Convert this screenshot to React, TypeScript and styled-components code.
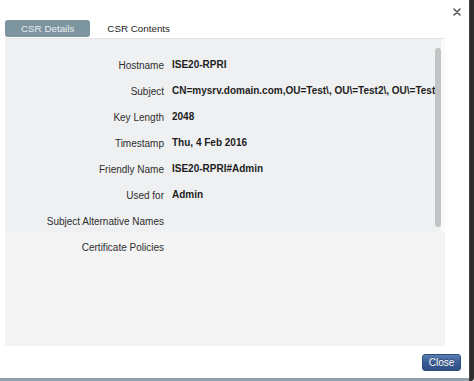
import React, { useState } from 'react';
import styled, { createGlobalStyle } from 'styled-components';

const GlobalStyle = createGlobalStyle`
  html, body {
    margin: 0;
    padding: 0;
    background: #ffffff;
    font-family: "Liberation Sans", Arial, sans-serif;
  }
`;

const Page = styled.div`
  display: grid;
  grid-template-columns: 469px 5px;
  grid-template-rows: 378px 3px;
  width: 474px;
  height: 381px;
  overflow: hidden;
`;

const Dialog = styled.div`
  grid-column: 1;
  grid-row: 1;
  display: flex;
  flex-direction: column;
  background: #ffffff;
`;

const WindowEdge = styled.div`
  grid-column: 2;
  grid-row: 1 / span 2;
  background: linear-gradient(to right, #4a4a4a, #262626 40%, #333333);
  border-bottom-right-radius: 3px;
`;

const BottomEdge = styled.div`
  grid-column: 1;
  grid-row: 2;
  background: #95a2ae;
`;

const TopBar = styled.div`
  height: 20px;
  display: flex;
  justify-content: flex-end;
  align-items: center;
  padding-right: 8px;
`;

const CloseX = styled.button`
  width: 9px;
  height: 9px;
  padding: 0;
  border: none;
  background: none;
  display: flex;
  align-items: center;
  justify-content: center;
  cursor: pointer;
  margin-top: 3px;
`;

const TabsList = styled.div`
  display: flex;
  gap: 1px;
  margin-left: 5px;
  height: 18px;
`;

const Tab = styled.button<{ active: boolean }>`
  height: 17px;
  min-width: ${p => (p.active ? '83px' : 'auto')};
  padding: 0 16px;
  border: none;
  border-radius: 3px;
  background: ${p => (p.active ? '#7d959f' : 'transparent')};
  color: ${p => (p.active ? '#e8eef1' : '#222222')};
  font-family: "Liberation Sans", Arial, sans-serif;
  font-size: 9.8px;
  line-height: 17px;
  cursor: pointer;
`;

const Panel = styled.div`
  margin: 0 24px 0 5px;
  height: 308px;
  background: #f4f4f4;
  border-top: 1px solid #e3e4e5;
  box-sizing: border-box;
  display: flex;
  flex-direction: column;
`;

const ScrollArea = styled.div`
  display: flex;
  height: 193px;
  background: #eef0f1;
`;

const Content = styled.div`
  width: 430px;
  overflow-x: clip;
  overflow-y: visible;
  padding-top: 14px;
  display: grid;
  grid-template-columns: 159px auto;
  grid-auto-rows: 26px;
  column-gap: 8px;
  align-content: start;
  align-items: start;
`;

const Label = styled.div`
  text-align: right;
  font-size: 10px;
  line-height: 26px;
  color: #2e2e2e;
  white-space: nowrap;
`;

const Value = styled.div`
  font-size: 10px;
  font-weight: bold;
  line-height: 23px;
  color: #1e1e1e;
  white-space: nowrap;
`;

const ScrollTrack = styled.div`
  width: 10px;
  padding-top: 9px;
  box-sizing: border-box;
  background: linear-gradient(to right, #eef0f1 0, #eef0f1 6px, #fafafa 6px);
`;

const Thumb = styled.div`
  width: 6px;
  height: 179px;
  border-radius: 3px;
  background: #c2c3c4;
`;

const Footer = styled.div`
  display: flex;
  justify-content: flex-end;
  padding: 8px 8px 0 0;
`;

const CloseButton = styled.button`
  width: 39px;
  height: 17px;
  padding: 0;
  border: 1px solid #2d4b7a;
  border-radius: 3px;
  background: linear-gradient(to bottom, #5a7db3, #3a5d93 50%, #2f5087);
  color: #ffffff;
  font-family: "Liberation Sans", Arial, sans-serif;
  font-size: 10px;
  line-height: 15px;
  text-shadow: 0 -1px 0 rgba(0, 0, 0, 0.3);
  cursor: pointer;
`;

type TabType = 'details' | 'contents';

const rows: [string, string][] = [
  ['Hostname', 'ISE20-RPRI'],
  ['Subject', 'CN=mysrv.domain.com,OU=Test\\, OU\\=Test2\\, OU\\=Test3'],
  ['Key Length', '2048'],
  ['Timestamp', 'Thu, 4 Feb 2016'],
  ['Friendly Name', 'ISE20-RPRI#Admin'],
  ['Used for', 'Admin'],
  ['Subject Alternative Names', ''],
  ['Certificate Policies', ''],
];

export default function App() {
  const [activeTab, setActiveTab] = useState<TabType>('details');

  return (
    <Page>
      <GlobalStyle />
      <Dialog>
        <TopBar>
          <CloseX aria-label="close">
            <svg width="8" height="8" viewBox="0 0 8 8">
              <path d="M1 1 L7 7 M7 1 L1 7" stroke="#555" strokeWidth="1.6" strokeLinecap="round" />
            </svg>
          </CloseX>
        </TopBar>
        <TabsList>
          <Tab active={activeTab === 'details'} onClick={() => setActiveTab('details')}>
            CSR Details
          </Tab>
          <Tab active={activeTab === 'contents'} onClick={() => setActiveTab('contents')}>
            CSR Contents
          </Tab>
        </TabsList>
        <Panel>
          <ScrollArea>
            <Content>
              {rows.map(([label, value]) => (
                <React.Fragment key={label}>
                  <Label>{label}</Label>
                  <Value>{value}</Value>
                </React.Fragment>
              ))}
            </Content>
            <ScrollTrack>
              <Thumb />
            </ScrollTrack>
          </ScrollArea>
        </Panel>
        <Footer>
          <CloseButton>Close</CloseButton>
        </Footer>
      </Dialog>
      <WindowEdge />
      <BottomEdge />
    </Page>
  );
}
